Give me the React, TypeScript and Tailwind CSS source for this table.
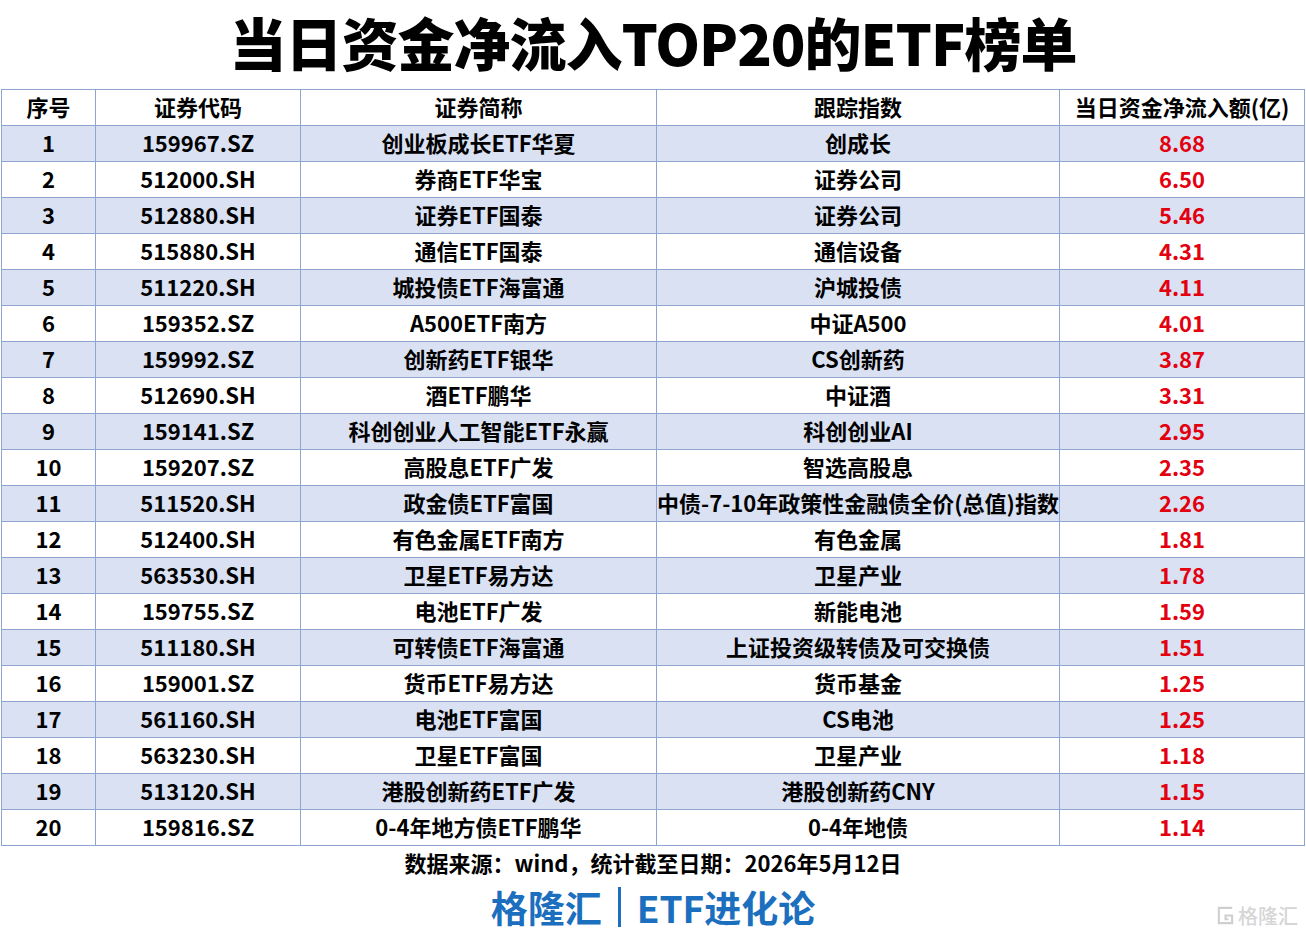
import React from 'react';

const rows: [string, string, string, string, string][] = [
  ['1', '159967.SZ', '创业板成长ETF华夏', '创成长', '8.68'],
  ['2', '512000.SH', '券商ETF华宝', '证券公司', '6.50'],
  ['3', '512880.SH', '证券ETF国泰', '证券公司', '5.46'],
  ['4', '515880.SH', '通信ETF国泰', '通信设备', '4.31'],
  ['5', '511220.SH', '城投债ETF海富通', '沪城投债', '4.11'],
  ['6', '159352.SZ', 'A500ETF南方', '中证A500', '4.01'],
  ['7', '159992.SZ', '创新药ETF银华', 'CS创新药', '3.87'],
  ['8', '512690.SH', '酒ETF鹏华', '中证酒', '3.31'],
  ['9', '159141.SZ', '科创创业人工智能ETF永赢', '科创创业AI', '2.95'],
  ['10', '159207.SZ', '高股息ETF广发', '智选高股息', '2.35'],
  ['11', '511520.SH', '政金债ETF富国', '中债-7-10年政策性金融债全价(总值)指数', '2.26'],
  ['12', '512400.SH', '有色金属ETF南方', '有色金属', '1.81'],
  ['13', '563530.SH', '卫星ETF易方达', '卫星产业', '1.78'],
  ['14', '159755.SZ', '电池ETF广发', '新能电池', '1.59'],
  ['15', '511180.SH', '可转债ETF海富通', '上证投资级转债及可交换债', '1.51'],
  ['16', '159001.SZ', '货币ETF易方达', '货币基金', '1.25'],
  ['17', '561160.SH', '电池ETF富国', 'CS电池', '1.25'],
  ['18', '563230.SH', '卫星ETF富国', '卫星产业', '1.18'],
  ['19', '513120.SH', '港股创新药ETF广发', '港股创新药CNY', '1.15'],
  ['20', '159816.SZ', '0-4年地方债ETF鹏华', '0-4年地债', '1.14'],
];

const headers = ['序号', '证券代码', '证券简称', '跟踪指数', '当日资金净流入额(亿)'];
const widths = ['w-[94px]', 'w-[205px]', 'w-[356px]', 'w-[403px]', 'w-[245px]'];

export default function App() {
  return (
    <div className="w-[1306px] h-[941px] bg-white overflow-hidden relative font-['Noto_Sans_CJK_SC',sans-serif] text-black">
      {/* Title */}
      <div className="h-[89px] flex items-center justify-center">
        <h1 className="text-[57px] font-black leading-none tracking-[-1px] mt-[-6px]">当日资金净流入TOP20的ETF榜单</h1>
      </div>

      {/* Table */}
      <table className="ml-px border-collapse table-fixed w-[1303px] border border-[#8fa5cf]">
        <thead>
          <tr className="h-[36px] bg-white">
            {headers.map((h, i) => (
              <th key={i} className={`${widths[i]} border border-[#8fa5cf] p-0 pb-[3px] text-[22px] font-semibold leading-none text-center whitespace-nowrap`}>{h}</th>
            ))}
          </tr>
        </thead>
        <tbody>
          {rows.map((r, i) => (
            <tr key={i} className={`h-[36px] ${i % 2 === 0 ? 'bg-[#d9e1f2]' : 'bg-white'}`}>
              <td className="border border-[#8fa5cf] p-0 pb-[3px] text-center text-[22px] font-semibold leading-none">{r[0]}</td>
              <td className="border border-[#8fa5cf] p-0 pb-[3px] text-center text-[22px] font-semibold leading-none">{r[1]}</td>
              <td className="border border-[#8fa5cf] p-0 pb-[3px] text-center text-[22px] font-semibold leading-none whitespace-nowrap">{r[2]}</td>
              <td className="border border-[#8fa5cf] p-0 pb-[3px] text-center text-[22px] font-semibold leading-none whitespace-nowrap">{r[3]}</td>
              <td className="border border-[#8fa5cf] p-0 pb-[3px] text-center text-[22px] font-semibold leading-none text-[#e3000f]">{r[4]}</td>
            </tr>
          ))}
        </tbody>
      </table>

      {/* Footer */}
      <div className="mt-[5px] text-center text-[22px] font-semibold leading-none">数据来源：wind，统计截至日期：2026年5月12日</div>
      <div className="mt-[14px] flex items-center justify-center gap-[16px] text-[37px] font-bold leading-none text-[#1c6fbe]">
        <span>格隆汇</span>
        <span className="w-[3px] h-[40px] bg-[#1c6fbe]" />
        <span>ETF进化论</span>
      </div>

      {/* Watermark */}
      <div className="absolute right-[8px] bottom-[15px] flex items-center gap-[3px] text-[#d6d6d6]">
        <svg width="19" height="21" viewBox="0 0 20 22" fill="none" stroke="#cfcfcf" strokeWidth="2.2">
          <path d="M17 3H3v16h14v-8H10v4h3" />
        </svg>
        <span className="text-[20px] font-medium leading-none">格隆汇</span>
      </div>
    </div>
  );
}
